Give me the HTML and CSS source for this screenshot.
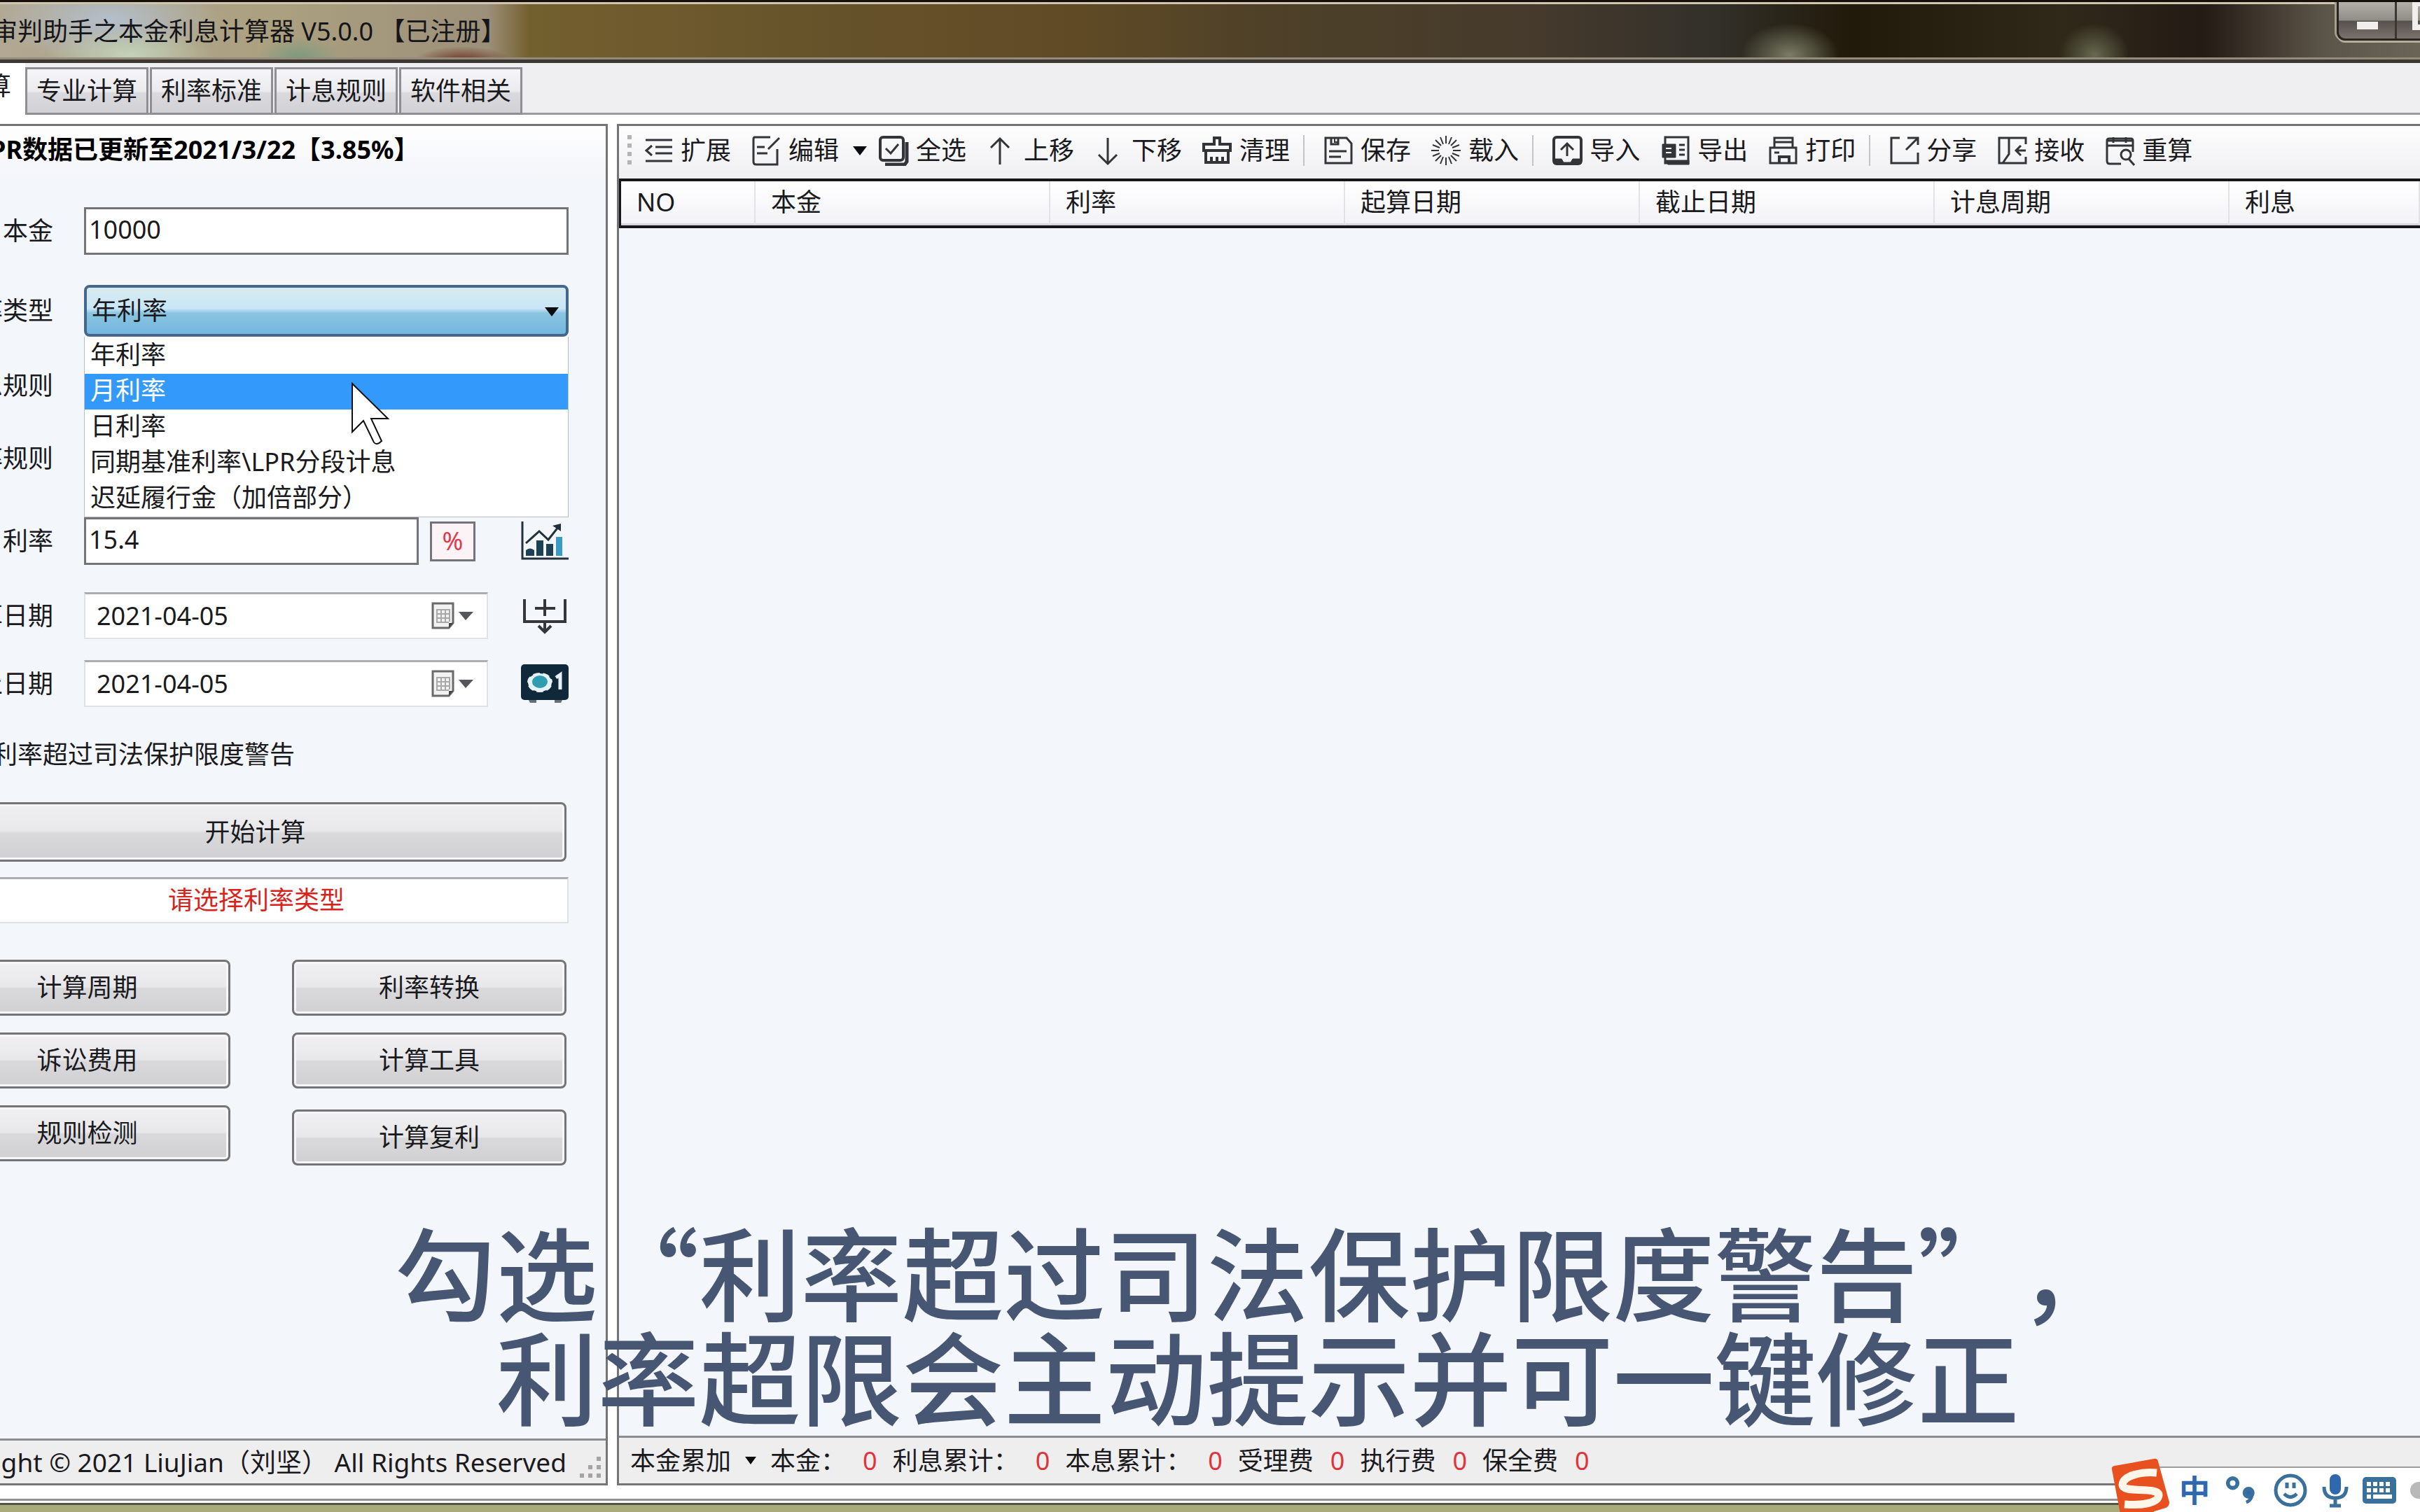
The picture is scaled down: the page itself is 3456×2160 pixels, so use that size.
FILE: index.html
```html
<!DOCTYPE html>
<html lang="zh-CN">
<head>
  <meta charset="UTF-8" />
  <meta name="viewport" content="width=device-width, initial-scale=1" />
  <title>本金利息计算器</title>
  <link rel="stylesheet" href="styles.css">
</head>
<body>

<div class="window">
  <header class="titlebar">
    <h1>审判助手之本金利息计算器 V5.0.0 【已注册】</h1>
    <div class="window-buttons">
      <button type="button" class="win-min" aria-label="最小化"></button>
      <button type="button" class="win-max" aria-label="最大化"></button>
    </div>
  </header>

  <nav class="tabs">
    <button type="button" class="tab active">常规计算</button>
    <button type="button" class="tab">专业计算</button>
    <button type="button" class="tab">利率标准</button>
    <button type="button" class="tab">计息规则</button>
    <button type="button" class="tab">软件相关</button>
  </nav>

  <main class="workspace">
    <section class="panel side">
      <h2>LPR数据已更新至2021/3/22【3.85%】</h2>

      <form class="form">
        <div class="row row-money">
          <label for="money">本金</label>
          <input type="text" id="money" class="field" value="10000">
        </div>

        <div class="row row-type">
          <label for="type">利率类型</label>
          <div class="combo">
            <select id="type">
              <option>年利率</option>
            </select>
            <span class="arrow"></span>
            <ul class="menu">
              <li>年利率</li>
              <li class="selected">月利率</li>
              <li>日利率</li>
              <li>同期基准利率\LPR分段计息</li>
              <li>迟延履行金（加倍部分）</li>
            </ul>
          </div>
        </div>

        <div class="row row-rule">
          <label for="period-rule">计息规则</label>
          <input type="text" id="period-rule" class="field">
        </div>
        <div class="row row-rule">
          <label for="rate-rule">利率规则</label>
          <input type="text" id="rate-rule" class="field">
        </div>

        <div class="row row-rate">
          <label for="rate">利率</label>
          <input type="text" id="rate" class="field" value="15.4">
          <button type="button" class="percent">%</button>
          <button type="button" class="icon-btn" aria-label="利率图表">
            <svg viewBox="0 0 68 56">
              <path d="M2 0V53H68" fill="none" stroke="#22303c" stroke-width="3"/>
              <path d="M7 31 26 14 39 26 54 7" fill="none" stroke="#22303c" stroke-width="3"/>
              <path d="M45 6 57 3V14Z" fill="#22303c"/>
              <path d="M7 41q6-5 12 0v8H7zM22 27h10v22H22zM36 32h10v17H36z" fill="#1d4154"/>
              <path d="M50 22h9v27h-9z" fill="#3a9cc4"/>
            </svg>
          </button>
        </div>

        <div class="row row-date">
          <label for="start">起算日期</label>
          <div class="date">
            <input type="text" id="start" value="2021-04-05">
            <svg viewBox="0 0 60 40">
              <path d="M2 2h29v28l-6 7H2z" fill="#f2f2f2" stroke="#6a6a6a" stroke-width="3"/>
              <path d="M7 11h20M7 17h20M7 23h20M7 29h18M8 10v20M14 10v20M20 10v20M26 10v18" stroke="#a9a9a9" stroke-width="2"/>
              <path d="M25 37v-7h6z" fill="#444"/>
              <path d="M39 14h21L49 26z" fill="#55555c"/>
            </svg>
          </div>
          <button type="button" class="icon-btn" aria-label="添加日期">
            <svg viewBox="0 0 68 56">
              <path d="M5 4V36H63V4" fill="none" stroke="#35373d" stroke-width="4"/>
              <path d="M34 4V28M20 17H49M34 36V50M25 42 34 51 43 42" fill="none" stroke="#35373d" stroke-width="4"/>
            </svg>
          </button>
        </div>

        <div class="row row-date">
          <label for="end">截止日期</label>
          <div class="date">
            <input type="text" id="end" value="2021-04-05">
            <svg viewBox="0 0 60 40">
              <path d="M2 2h29v28l-6 7H2z" fill="#f2f2f2" stroke="#6a6a6a" stroke-width="3"/>
              <path d="M7 11h20M7 17h20M7 23h20M7 29h18M8 10v20M14 10v20M20 10v20M26 10v18" stroke="#a9a9a9" stroke-width="2"/>
              <path d="M25 37v-7h6z" fill="#444"/>
              <path d="M39 14h21L49 26z" fill="#55555c"/>
            </svg>
          </div>
          <button type="button" class="icon-btn" aria-label="金额">
            <svg viewBox="0 0 68 56">
              <path d="M10 49h12v6H13zM48 49h12l-3 6h-9z" fill="#64707a"/>
              <rect width="68" height="51" rx="5" fill="#10293a"/>
              <ellipse cx="27" cy="26" rx="18" ry="14" fill="#e6f3f6"/>
              <ellipse cx="27" cy="26" rx="18" ry="14" fill="none" stroke="#10293a" stroke-width="2" stroke-dasharray="5 10"/>
              <ellipse cx="27" cy="25" rx="11" ry="9" fill="#2e9db0"/>
              <path d="M50 19 56 15V36" fill="none" stroke="#e6f3f6" stroke-width="5"/>
            </svg>
          </button>
        </div>

        <label class="warn"><input type="checkbox" checked>利率超过司法保护限度警告</label>

        <button type="button" class="btn start">开始计算</button>
        <output class="message">请选择利率类型</output>

        <div class="tools">
          <div class="tools-col">
            <button type="button" class="btn">计算周期</button>
            <button type="button" class="btn">诉讼费用</button>
            <button type="button" class="btn">规则检测</button>
          </div>
          <div class="tools-col">
            <button type="button" class="btn">利率转换</button>
            <button type="button" class="btn">计算工具</button>
            <button type="button" class="btn">计算复利</button>
          </div>
        </div>
      </form>

      <footer class="statusbar copyright">
        <span>Copyright © 2021 LiuJian（刘坚） All Rights Reserved</span>
        <svg class="grip" viewBox="0 0 32 32">
          <path d="M25 0h6v6h-6zM13 12h6v6h-6zM25 12h6v6h-6zM1 24h6v6H1zM13 24h6v6h-6zM25 24h6v6h-6z" fill="#a5a3a3"/>
        </svg>
      </footer>
    </section>

    <section class="panel data">
      <div class="toolbar">
        <svg class="handle" viewBox="0 0 6 44">
          <path d="M0 0h6v6H0zM0 12h6v6H0zM0 24h6v6H0zM0 36h6v6H0z" fill="#b5b3b3"/>
        </svg>
        <button type="button" class="tool">
          <svg viewBox="0 0 44 44"><path d="M4 7H42M18 17H42M18 26H42M4 37H42M13 15 5 22 13 29" stroke-width="3"/></svg>扩展
        </button>
        <button type="button" class="tool">
          <svg viewBox="0 0 44 44"><path d="M28 3H6Q4 3 4 6V38Q4 42 8 42H38V20M9 17H20M9 26H24M41 4 25 20" stroke-width="3"/></svg>编辑
          <span class="arrow"></span>
        </button>
        <button type="button" class="tool">
          <svg viewBox="0 0 44 44"><rect x="3" y="3" width="33" height="33" rx="4" stroke-width="4"/><path d="M11 19 18 26 29 13" stroke-width="3"/><path d="M41 10V38L38 42H10" stroke-width="5"/></svg>全选
        </button>
        <button type="button" class="tool">
          <svg viewBox="0 0 44 44"><path d="M20 42V5M7 18 20 5 33 18" stroke-width="3"/></svg>上移
        </button>
        <button type="button" class="tool">
          <svg viewBox="0 0 44 44"><path d="M20 4V41M7 28 20 41 33 28" stroke-width="3"/></svg>下移
        </button>
        <button type="button" class="tool">
          <svg viewBox="0 0 44 44"><path d="M3 22V13H18V4H26V13H41V22ZM6 22V39H38V22M14 39V31M22 39V31M30 39V31" stroke-width="4"/></svg>清理
        </button>
        <span class="divider"></span>
        <button type="button" class="tool">
          <svg viewBox="0 0 44 44"><path d="M4 4H34L41 12V40H4ZM12 4V13H22V4M9 23H34M9 31H26" stroke-width="3"/><path d="M17 4h5v6h-5z" stroke-width="2"/></svg>保存
        </button>
        <button type="button" class="tool">
          <svg viewBox="0 0 44 44"><path d="M22 1V12M22 32V43M1 22H12M32 22H43M7 7 15 15M29 29 37 37M37 7 29 15M15 29 7 37M14 3 18 13M26 31 30 41M30 3 26 13M18 31 14 41M3 14 13 18M31 26 41 30M41 14 31 18M13 26 3 30" stroke-width="2"/></svg>载入
        </button>
        <span class="divider"></span>
        <button type="button" class="tool">
          <svg viewBox="0 0 44 44"><rect x="3" y="3" width="39" height="38" rx="4" stroke-width="4"/><path d="M22 30V12M13 21 22 12 31 21" stroke-width="3"/><path d="M3 34H14L17 39H27L30 34H42V41H3Z" fill="#333438"/></svg>导入
        </button>
        <button type="button" class="tool">
          <svg viewBox="0 0 44 44"><path d="M8 3H41V40H8Z" stroke-width="3"/><path d="M4 13h19v19H4zM8 36h34v6H12z" fill="#333438"/><path d="M9 19H17M9 25H17" stroke="#fff" stroke-width="2"/><path d="M28 14H36M28 21H36M28 28H36" stroke-width="3"/></svg>导出
        </button>
        <button type="button" class="tool">
          <svg viewBox="0 0 44 44"><path d="M10 18V4H36V18M10 10H36M4 18H41V40H4Z" stroke-width="3"/><path d="M10 25H17" stroke-width="3"/><path d="M17 40V31H31V40" stroke-width="4"/></svg>打印
        </button>
        <span class="divider"></span>
        <button type="button" class="tool">
          <svg viewBox="0 0 44 44"><path d="M16 4H4V40H42V25M27 4H42V14M41 5 25 21" stroke-width="3"/></svg>分享
        </button>
        <button type="button" class="tool">
          <svg viewBox="0 0 44 44"><path d="M42 13V4H4V40H42V31M18 4V27L9 40M42 22H29M35 15 28 22 35 29" stroke-width="3"/></svg>接收
        </button>
        <button type="button" class="tool">
          <svg viewBox="0 0 44 44"><path d="M24 41H8Q4 41 4 37V8Q4 5 7 5H38Q41 5 41 8V24" stroke-width="3"/><path d="M4 8H41M4 15H41M13 3V11M31 3V11" stroke-width="3"/><circle cx="31" cy="28" r="7" stroke-width="3"/><path d="M35 34 43 43" stroke-width="3"/></svg>重算
        </button>
      </div>

      <div class="grid">
        <table>
          <thead>
            <tr>
              <th class="col-no">NO</th>
              <th>本金</th>
              <th>利率</th>
              <th>起算日期</th>
              <th>截止日期</th>
              <th>计息周期</th>
              <th class="col-rest">利息</th>
            </tr>
          </thead>
        </table>
      </div>

      <footer class="statusbar totals">
        <button type="button" class="sum-mode">本金累加<span class="arrow"></span></button>
        <span class="total">本金：<b>0</b></span>
        <span class="total">利息累计：<b>0</b></span>
        <span class="total">本息累计：<b>0</b></span>
        <span class="total">受理费<b>0</b></span>
        <span class="total">执行费<b>0</b></span>
        <span class="total">保全费<b>0</b></span>
      </footer>
    </section>
  </main>
  <div class="window-edge"></div>
</div>

<svg class="cursor" viewBox="0 0 56 92">
  <path d="M2 3V72L18 56 33 87Q37 92 44 85L29 53H53Z" fill="#fff" stroke="#111" stroke-width="2"/>
</svg>

<div class="ime">
  <svg class="ime-logo" viewBox="0 0 86 80">
    <path d="M2 16Q1 12 6 11L62 1Q67 0 68 5L84 63Q84 69 79 71L50 80H14Z" fill="#e8501f"/>
    <path d="M66 21C44 19 18 25 17 38 16 51 69 40 69 53 68 65 42 68 20 66" fill="none" stroke="#fff6ea" stroke-width="11"/>
  </svg>
  <span class="ime-lang">中</span>
  <svg viewBox="0 0 44 44"><circle cx="11" cy="13" r="6"/><circle cx="31" cy="25" r="5" fill="#2f68ae"/><path d="M35 25Q36 34 28 37" stroke-width="4"/></svg>
  <svg class="face" viewBox="0 0 50 50"><circle cx="25" cy="25" r="21"/><path d="M20 14V22M30 14V22M16 30Q25 39 34 30"/></svg>
  <svg viewBox="0 0 38 50"><rect x="11" y="2" width="16" height="29" rx="8" fill="#2f68ae" stroke="none"/><path d="M3 20Q3 36 19 36 35 36 35 20M19 36V47M11 47H27" stroke-width="5"/></svg>
  <svg class="keys" viewBox="0 0 48 38"><rect width="48" height="38" rx="5" fill="#39709c" stroke="none"/><path d="M6 10H42M6 19H42" stroke="#fff" stroke-width="6" stroke-dasharray="6 3"/><path d="M6 28H12M15 28H42" stroke="#fff" stroke-width="6"/></svg>
  <span class="ime-more"></span>
</div>

<p class="subtitle">勾选“利率超过司法保护限度警告”，<br>利率超限会主动提示并可一键修正</p>

</body>
</html>
```
FILE: styles.css
```css
* {
  box-sizing: border-box;
}
body {
  margin: 0;
  height: 100vh;
  overflow: hidden;
  position: relative;
  font-family: "Noto Sans", "Noto Sans CJK SC", sans-serif;
  font-size: 36px;
  line-height: 48px;
  color: #1a1a1e;
  background: #fff;
}
button, input, select {
  font: inherit;
  color: inherit;
  margin: 0;
  padding: 0;
  border: 0;
  background: none;
}
h1, h2, ul, p {
  margin: 0;
  padding: 0;
  font-weight: normal;
}

/* the window hangs over the left edge of the screen */
.window {
  display: flex;
  flex-direction: column;
  height: 100vh;
  margin-left: -104px;
}

.titlebar {
  position: relative;
  flex: none;
  height: 90px;
  padding: 18px 0 0 93px;
  border-top: 3px solid #17100a;
  border-bottom: 5px solid #3d3832;
  box-shadow: inset 0 3px #cfc5b0, inset 0 -3px #938b7d;
  background:
    radial-gradient(ellipse 120px 40px at 290px 75px, #c3d2b8, transparent),
    radial-gradient(ellipse 160px 60px at 260px 25px, #b4bfcc, transparent),
    radial-gradient(ellipse 60px 30px at 530px 80px, #7c9a80, transparent),
    radial-gradient(ellipse 70px 22px at 765px 85px, #6a2f20, transparent),
    radial-gradient(ellipse 70px 46px at 2660px 76px, #7a7c66, transparent),
    radial-gradient(ellipse 50px 46px at 3095px 76px, #66694f, transparent),
    linear-gradient(90deg, #b3aa98 0, #aba07f 500px, #9c907a 800px, #73602f 860px, #66522a 1300px, #5f4a25 1650px, #4f4128 1900px, #453a2c 2300px, #33302a 2550px, #211a0a 2750px, #30291a 3050px, #231b14 3250px, #5b5448 3420px, #6b6558);
}
.titlebar h1 {
  font-size: 36px;
  line-height: 48px;
  white-space: pre;
  color: #15151a;
}
.window-buttons {
  position: absolute;
  top: 0;
  right: 0;
  display: flex;
  width: 119px;
  height: 55px;
  overflow: hidden;
  border-left: 3px solid #2a2520;
  border-bottom: 3px solid #2a2520;
  border-bottom-left-radius: 12px;
  box-shadow: 0 3px #b5ad9c, -3px 0 #a79f8d;
  background: linear-gradient(#b3b0aa, #908c87 50%, #57504d 52%, #7a736c);
}
.win-min {
  position: relative;
  width: 83px;
  border-right: 3px solid #3c3733;
}
.win-max {
  position: relative;
  flex: 1;
}
.win-min::after {
  content: "";
  position: absolute;
  left: 26px;
  bottom: 13px;
  width: 30px;
  height: 11px;
  background: #f3eeee;
}
.win-max::after {
  content: "";
  position: absolute;
  left: 22px;
  bottom: 12px;
  width: 30px;
  height: 26px;
  border: 8px solid #f3eeee;
}

.tabs {
  flex: none;
  display: flex;
  align-items: flex-end;
  gap: 2px;
  height: 74px;
  padding-left: 12px;
  background: #efeef0;
  box-shadow: inset 0 -3px #9b9b9e;
}
.tab {
  height: 68px;
  padding: 0 13px;
  border: 3px solid #8f8f93;
  background: linear-gradient(#f6f6f8, #ebebee 50%, #dadade 55%, #d2d2d6);
}
.tab.active {
  width: 128px;
  height: 74px;
  padding: 0 20px 8px 0;
  margin-right: -2px;
  border-width: 0;
  background: #fff;
  direction: rtl;
  white-space: nowrap;
}

.workspace {
  flex: 1;
  display: flex;
  gap: 13px;
  min-height: 0;
  padding: 13px 0 19px 12px;
  background: #fff;
}
.panel {
  display: flex;
  flex-direction: column;
  border: 3px solid #747476;
  background: #f3f6fb;
}
.side {
  flex: none;
  width: 960px;
}
.data {
  flex: 1;
  min-width: 0;
  border-right: 0;
}

.side h2 {
  height: 76px;
  padding: 10px 0 0 55px;
  font-size: 36px;
  font-weight: bold;
  white-space: nowrap;
  color: #000;
  background: linear-gradient(#fefefe, #f4f5fa);
}
.form {
  flex: 1;
  width: 901px;
  padding-left: 9px;
}
.row {
  display: flex;
  align-items: center;
}
.row label {
  width: 156px;
  margin-right: 44px;
  text-align: right;
  white-space: nowrap;
}
.row-money {
  height: 68px;
  margin-top: 40px;
}
.row-type {
  height: 74px;
  margin-top: 43px;
}
.row-rule {
  height: 68px;
  margin-top: 36px;
}
.row-rate {
  height: 68px;
  margin-top: 50px;
}
.row-date {
  height: 67px;
  margin-top: 39px;
}
.row-date + .row-date {
  margin-top: 30px;
}
.field {
  flex: 1;
  min-width: 0;
  height: 68px;
  padding: 0 4px 6px;
  border: 3px solid #747478;
  background: #fff;
}
.percent {
  width: 65px;
  height: 57px;
  margin-left: 16px;
  border: 3px solid #747478;
  background: #fbf3f6;
  color: #e2384a;
}
.icon-btn {
  width: 68px;
  height: 56px;
}
.icon-btn svg {
  display: block;
}
.row-rate .icon-btn {
  margin-left: 65px;
}
.row-date .icon-btn {
  margin-left: auto;
}

.combo {
  position: relative;
  flex: 1;
}
.combo select {
  display: block;
  width: 100%;
  height: 74px;
  padding: 0 7px;
  appearance: none;
  border: 4px solid #45688a;
  border-radius: 8px;
  background: linear-gradient(#d7ebee, #c9e6f7 45%, #8ac4e0 55%, #74b7df);
}
.arrow {
  border: 10px solid transparent;
  border-top: 13px solid #0b0b12;
  border-bottom: 0;
}
.combo .arrow {
  position: absolute;
  right: 14px;
  top: 32px;
}
.menu {
  position: absolute;
  z-index: 1;
  left: 0;
  right: 0;
  top: 74px;
  padding-top: 2px;
  list-style: none;
  background: #fff;
  border: 1px solid #b9bcc4;
  border-top: 0;
}
.menu li {
  height: 51px;
  padding-left: 8px;
}
.menu .selected {
  background: #3399fb;
  color: #fff;
}

.date {
  display: flex;
  align-items: center;
  width: 577px;
  height: 67px;
  padding: 0 19px 0 16px;
  border: 2px solid #dfe1e6;
  border-top: 3px solid #abadb3;
  background: #fff;
}
.date input {
  flex: 1;
  min-width: 0;
}
.date svg {
  width: 60px;
  height: 40px;
}

.warn {
  display: flex;
  align-items: center;
  margin-top: 44px;
  padding-left: 69px;
  white-space: nowrap;
}
.warn input {
  width: 28px;
  height: 28px;
  margin: 0 8px 0 -36px;
}
.btn {
  display: block;
  width: 100%;
  height: 80px;
  border: 3px solid #747476;
  border-radius: 8px;
  box-shadow: inset 0 0 0 3px #f6f6f8;
  background: linear-gradient(#f0f0f3, #e8e8ea 48%, #d9d9dc 52%, #d0d0d3);
}
.start {
  width: 889px;
  height: 85px;
  margin-top: 44px;
}
.message {
  display: block;
  height: 66px;
  margin-top: 22px;
  padding-top: 6px;
  border: 2px solid #dfe1e6;
  border-top: 3px solid #abadb3;
  background: #fff;
  color: #d8231d;
  text-align: center;
}
.tools {
  display: flex;
  gap: 88px;
  width: 889px;
  margin-top: 52px;
}
.tools-col {
  display: flex;
  flex-direction: column;
  gap: 24px;
  width: 409px;
}
.tools-col + .tools-col {
  width: 392px;
}
.tools-col + .tools-col .btn:last-child {
  margin-top: 6px;
}

.statusbar {
  flex: none;
  display: flex;
  align-items: center;
  height: 68px;
  border-top: 3px solid #8c8c90;
  background: #efeeef;
  white-space: nowrap;
}
.copyright {
  height: 64px;
  justify-content: flex-end;
  padding-right: 6px;
  font-size: 37px;
}
.copyright span {
  flex: none;
}
.grip {
  flex: none;
  width: 32px;
  height: 32px;
  margin: 16px 0 0 18px;
}

.toolbar {
  flex: none;
  display: flex;
  align-items: center;
  height: 75px;
  padding: 0 0 5px 12px;
  background: linear-gradient(#fdfdfe, #efeff1);
}
.handle {
  width: 6px;
  height: 44px;
  margin-right: 16px;
}
.tool {
  display: flex;
  align-items: center;
  gap: 10px;
  margin-right: 28px;
  white-space: nowrap;
}
.tool svg {
  width: 44px;
  height: 44px;
  fill: none;
  stroke: #333438;
}
.tool .arrow {
  margin: 0 -12px 0 10px;
}
.divider {
  width: 2px;
  height: 44px;
  margin: 0 26px 0 -9px;
  background: #c3c3c8;
}

.grid {
  flex: 1;
  overflow: hidden;
}
.grid table {
  width: 100%;
  border-collapse: separate;
  border-spacing: 0;
  table-layout: fixed;
  border: 4px solid #17171b;
  border-width: 4px 0 4px 3px;
}
.grid th {
  width: 421px;
  height: 63px;
  padding: 0 0 0 22px;
  text-align: left;
  font-weight: normal;
  border-right: 2px solid #e2e2e7;
  border-bottom: 3px solid #d9d9dd;
  background: linear-gradient(#fff, #f3f3f7);
}
.grid .col-no {
  width: 192px;
}
.grid .col-rest {
  width: auto;
}

.totals {
  padding-left: 16px;
}
.sum-mode {
  display: flex;
  align-items: center;
  margin-right: 20px;
}
.sum-mode .arrow {
  margin-left: 20px;
  border-width: 11px 8px 0;
}
.total {
  margin-right: 22px;
}
.total b {
  margin-left: 24px;
  font-weight: normal;
  color: #e0343c;
}

.window-edge {
  flex: none;
  height: 19px;
  border-top: 3px solid #939393;
  background: linear-gradient(#fff 3px, #55534c 3px, #55534c 6px, #a9ab7c 6px);
}

.cursor {
  position: absolute;
  z-index: 2;
  left: 501px;
  top: 545px;
  width: 56px;
  height: 92px;
}

.ime {
  position: absolute;
  right: 0;
  bottom: 0;
  display: flex;
  align-items: center;
  gap: 20px;
  height: 65px;
  padding-left: 36px;
  border-top: 2px solid #a09da2;
  background: #fff;
}
.ime svg {
  height: 50px;
  fill: none;
  stroke: #39709c;
  stroke-width: 5;
}
.ime .keys {
  height: 38px;
}
.ime-logo.ime-logo {
  position: absolute;
  left: -62px;
  bottom: -3px;
  width: 86px;
  height: 80px;
  stroke: none;
}
.ime-lang {
  font-size: 44px;
  font-weight: bold;
  color: #2f68ae;
}
.ime-more {
  width: 14px;
  height: 24px;
  border-radius: 12px 0 0 12px;
  background: #b9b9bb;
}

.subtitle {
  position: absolute;
  left: 136px;
  right: 0;
  bottom: 122px;
  font-family: "Noto Sans CJK SC", sans-serif;
  font-size: 145px;
  line-height: 149px;
  font-weight: 500;
  text-align: center;
  text-spacing-trim: space-all;
  white-space: nowrap;
  color: #475672;
}
```
